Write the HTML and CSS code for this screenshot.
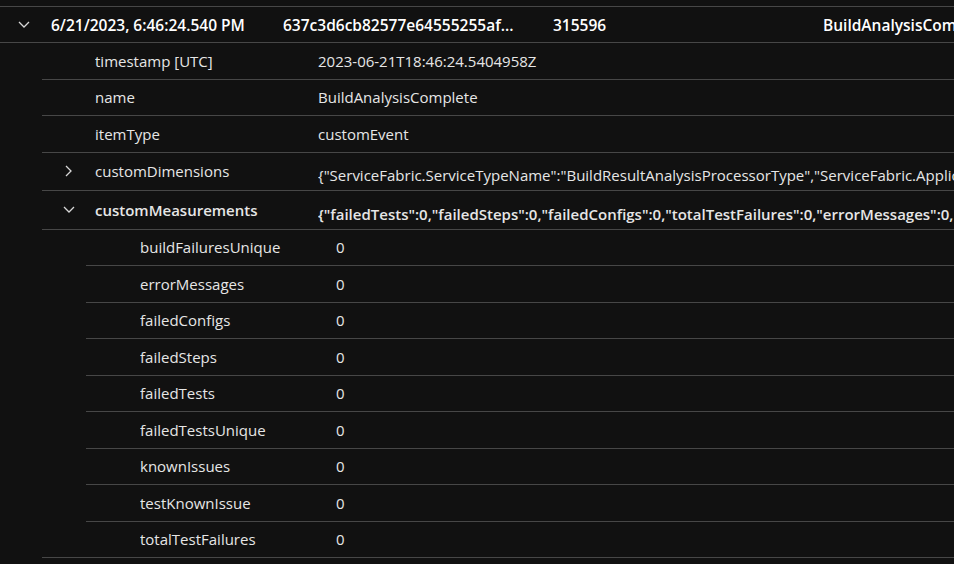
FILE: index.html
```html
<!DOCTYPE html>
<html>
<head>
<meta charset="utf-8">
<link rel="stylesheet" href="styles.css">
</head>
<body>
<div class="grid-view">
  <div class="row header">
    <div class="chev-cell"><svg class="chev-down" viewBox="0 0 12 7"><path d="M1 1 L6 6 L11 1"/></svg></div>
    <div class="cell">6/21/2023, 6:46:24.540 PM</div>
    <div class="cell">637c3d6cb82577e64555255af...</div>
    <div class="cell">315596</div>
    <div class="cell">BuildAnalysisComplete</div>
  </div>
  <div class="children">
    <div class="row child">
      <div class="chev-cell"></div>
      <div class="key">timestamp [UTC]</div>
      <div class="val">2023-06-21T18:46:24.5404958Z</div>
    </div>
    <div class="row child">
      <div class="chev-cell"></div>
      <div class="key">name</div>
      <div class="val">BuildAnalysisComplete</div>
    </div>
    <div class="row child">
      <div class="chev-cell"></div>
      <div class="key">itemType</div>
      <div class="val">customEvent</div>
    </div>
    <div class="row child tall">
      <div class="chev-cell"><svg class="chev-right" viewBox="0 0 7 12"><path d="M1 1 L6 6 L1 11"/></svg></div>
      <div class="key">customDimensions</div>
      <div class="val low">{"ServiceFabric.ServiceTypeName":"BuildResultAnalysisProcessorType","ServiceFabric.ApplicationName":"fabric:/BuildResultAnalysis"}</div>
    </div>
    <div class="group">
      <div class="row child tall bold">
        <div class="chev-cell"><svg class="chev-down" viewBox="0 0 12 7"><path d="M1 1 L6 6 L11 1"/></svg></div>
        <div class="key">customMeasurements</div>
        <div class="val low">{"failedTests":0,"failedSteps":0,"failedConfigs":0,"totalTestFailures":0,"errorMessages":0,"knownIssues":0}</div>
      </div>
      <div class="nested">
        <div class="row sub"><div></div><div class="key">buildFailuresUnique</div><div class="val">0</div></div>
        <div class="row sub"><div></div><div class="key">errorMessages</div><div class="val">0</div></div>
        <div class="row sub"><div></div><div class="key">failedConfigs</div><div class="val">0</div></div>
        <div class="row sub"><div></div><div class="key">failedSteps</div><div class="val">0</div></div>
        <div class="row sub"><div></div><div class="key">failedTests</div><div class="val">0</div></div>
        <div class="row sub"><div></div><div class="key">failedTestsUnique</div><div class="val">0</div></div>
        <div class="row sub"><div></div><div class="key">knownIssues</div><div class="val">0</div></div>
        <div class="row sub"><div></div><div class="key">testKnownIssue</div><div class="val">0</div></div>
        <div class="row sub last"><div></div><div class="key">totalTestFailures</div><div class="val">0</div></div>
      </div>
    </div>
  </div>
</div>
</body>
</html>
```

FILE: styles.css
```css
html, body {
  margin: 0;
  padding: 0;
  background: #111111;
  height: 100%;
  overflow: hidden;
}
body {
  font-family: "Open Sans", "Noto Sans", sans-serif;
  font-size: 15px;
  color: #e6e6e6;
}
.grid-view {
  padding-top: 6px;
  width: 954px;
  overflow: hidden;
}
.row {
  display: grid;
  align-items: center;
  box-sizing: border-box;
  white-space: nowrap;
  overflow: hidden;
  border-bottom: 1px solid #474747;
}
.row > div {
  overflow: hidden;
}
.header {
  height: 37px;
  border-top: 1px solid #474747;
  grid-template-columns: 51px 232px 270px 270px 1fr;
  font-weight: 600;
  color: #ffffff;
  font-size: 15.5px;
}
.header .cell {
  padding-top: 1px;
}
.chev-cell {
  display: flex;
  align-items: center;
  justify-content: center;
}
.header .chev-cell {
  justify-content: flex-start;
  padding-left: 18px;
}
.chev-down {
  width: 12px;
  height: 7px;
  fill: none;
  stroke: #d8d8d8;
  stroke-width: 1.3;
}
.chev-right {
  width: 7px;
  height: 12px;
  fill: none;
  stroke: #d8d8d8;
  stroke-width: 1.3;
}
.children {
  margin-left: 42px;
}
.child {
  height: 36.5px;
  grid-template-columns: 53px 223px 1fr;
}
.child.tall {
  height: 38.5px;
}
.val.low {
  padding-top: 8px;
}
.bold {
  font-weight: 600;
}
.group {
  border-bottom: 1px solid #474747;
}
.group > .child {
  border-bottom: 1px solid #474747;
}
.nested {
  margin-left: 44px;
}
.sub {
  height: 36.5px;
  grid-template-columns: 54px 196px 1fr;
}
.sub.last {
  border-bottom: none;
  height: 35.5px;
}
```
